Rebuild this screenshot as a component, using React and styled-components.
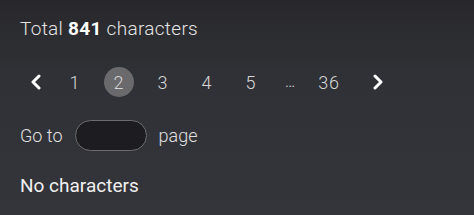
import React from "react"
import styled, { createGlobalStyle } from "styled-components"

const GlobalStyle = createGlobalStyle`
  html, body {
    margin: 0;
    padding: 0;
    background: #333439;
  }
  body {
    font-family: Roboto, "Noto Sans", sans-serif;
    -webkit-font-smoothing: antialiased;
  }
`

const pages = ["1", "2", "3", "4", "5", "...", "36"]

const App = () => (
  <>
    <GlobalStyle />
    <Panel>
      <Total>
        Total <strong>841</strong> characters
      </Total>
      <Pager>
        <NavButton aria-label="Previous page">
          <Chevron dir="left" />
        </NavButton>
        {pages.map(p =>
          p === "..." ? (
            <Ellipsis key={p}>…</Ellipsis>
          ) : (
            <PageButton key={p} $active={p === "2"}>
              {p}
            </PageButton>
          )
        )}
        <NavButton $side="next" aria-label="Next page">
          <Chevron dir="right" />
        </NavButton>
      </Pager>
      <GoTo>
        <span>Go to</span>
        <PageInput />
        <span>page</span>
      </GoTo>
      <Empty>No characters</Empty>
    </Panel>
  </>
)

const Chevron = ({ dir }) => (
  <svg width="12" height="16" viewBox="0 0 12 16">
    <polyline
      points={dir === "left" ? "9,2 3,8 9,14" : "3,2 9,8 3,14"}
      fill="none"
      stroke="#ffffff"
      strokeWidth="3"
      strokeLinecap="round"
      strokeLinejoin="round"
    />
  </svg>
)

export default App

const Panel = styled.div`
  box-sizing: border-box;
  min-height: 215px;
  padding: 14px 20px 0;
  display: flex;
  flex-direction: column;
  gap: 23px;
  background: linear-gradient(180deg, #28282c 0%, #303136 35%, #34353a 100%);
  color: #e6e6e6;
`

const Total = styled.div`
  font-size: 19px;
  line-height: 30px;
  letter-spacing: 0.3px;
  font-weight: 300;
  color: #e4e4e4;

  strong {
    font-weight: 700;
    color: #ffffff;
  }
`

const Pager = styled.div`
  display: flex;
  align-items: center;
  gap: 14px;
  height: 30px;
  padding-left: 6px;
`

const NavButton = styled.button`
  width: 20px;
  height: 30px;
  padding: 0;
  border: none;
  background: none;
  display: flex;
  align-items: center;
  justify-content: center;
  margin-left: ${({ $side }) => ($side === "next" ? "10px" : "0")};
`

const PageButton = styled.button`
  width: 30px;
  height: 30px;
  padding: 0;
  border: none;
  border-radius: 50%;
  font-family: inherit;
  font-size: 18px;
  font-weight: 300;
  letter-spacing: 0.8px;
  color: #d6d6d6;
  background: ${({ $active }) => ($active ? "#6a6a6d" : "transparent")};
`

const Ellipsis = styled.span`
  width: 20px;
  text-align: center;
  font-size: 15px;
  color: #bdbdbd;
`

const GoTo = styled.div`
  display: flex;
  align-items: center;
  gap: 12px;
  height: 31px;
  font-size: 18px;
  font-weight: 300;
  color: #e0e0e0;
`

const PageInput = styled.input`
  box-sizing: border-box;
  width: 72px;
  height: 31px;
  border: 1px solid #6c6c70;
  border-radius: 16px;
  background: #1d1d21;
  outline: none;
`

const Empty = styled.div`
  font-size: 19px;
  line-height: 30px;
  color: #f0f0f0;
  margin-top: -3px;
`
